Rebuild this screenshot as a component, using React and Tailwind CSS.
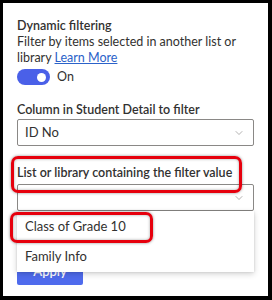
import React from 'react'
import { ChevronDown } from 'lucide-react'

const font = { fontFamily: 'Lato, "Open Sans", sans-serif' }

function Select({ value }) {
  return (
    <div className="h-[27px] border border-[#8a8886] rounded-[2px] flex items-center justify-between pl-[7px] pr-[8px] text-[13px] text-[#323130]">
      <span>{value}</span>
      <ChevronDown size={12} strokeWidth={1.3} className="text-[#8a8886]" />
    </div>
  )
}

export default function App() {
  return (
    <div
      style={font}
      className="relative w-[272px] h-[300px] overflow-hidden bg-white border-black border-l-[3px] border-t-[3px] border-r-4 border-b-4 pt-[14px] px-[14px] text-[#323130]"
    >
      {/* Dynamic filtering */}
      <h3 className="text-[12.5px] font-semibold leading-[17px] m-0">Dynamic filtering</h3>
      <p className="text-[12.5px] leading-[16px] m-0">
        Filter by items selected in another list or library{' '}
        <a className="text-[#2b62c9] underline">Learn More</a>
      </p>
      <div className="flex items-center gap-[7px] mt-[3px] h-[16px]">
        <div className="w-[33px] h-[16px] rounded-full bg-[#4a60e8] flex items-center justify-end pr-[4px]">
          <div className="w-[9px] h-[9px] rounded-full bg-white" />
        </div>
        <span className="text-[12.5px] leading-[16px]">On</span>
      </div>

      {/* Column */}
      <div className="mt-[16px] text-[12.5px] font-semibold leading-[17px]">Column in Student Detail to filter</div>
      <div className="mt-[1px]">
        <Select value="ID No" />
      </div>

      {/* List or library */}
      <div className="mt-[18px] text-[12.5px] font-semibold leading-[17px]">List or library containing the filter value</div>
      <div className="mt-[3px]">
        <Select value="" />
      </div>

      <button className="mt-[47px] w-[66px] h-[27px] rounded-[2px] bg-[#4f6bed] text-white text-[13px] font-semibold">
        Apply
      </button>

      {/* Dropdown menu */}
      <div className="absolute left-[14px] top-[208px] w-[237px] bg-white shadow-[0_2px_6px_rgba(0,0,0,0.18),0_0_2px_rgba(0,0,0,0.12)]">
        <div className="h-[31px] flex items-center pl-[8px] text-[13px]">Class of Grade 10</div>
        <div className="h-[30px] flex items-center pl-[8px] text-[13px]">Family Info</div>
      </div>

      {/* Annotations */}
      <div className="absolute left-[8px] top-[153px] w-[231px] h-[37px] rounded-[7px] border-[3px] border-[#e6000d] shadow-[0_0_3px_rgba(0,0,0,0.45),inset_0_0_3px_rgba(0,0,0,0.35)]" />
      <div className="absolute left-[7px] top-[209px] w-[143px] h-[31px] rounded-[7px] border-[3px] border-[#e6000d] shadow-[0_0_3px_rgba(0,0,0,0.45),inset_0_0_3px_rgba(0,0,0,0.35)]" />
    </div>
  )
}
